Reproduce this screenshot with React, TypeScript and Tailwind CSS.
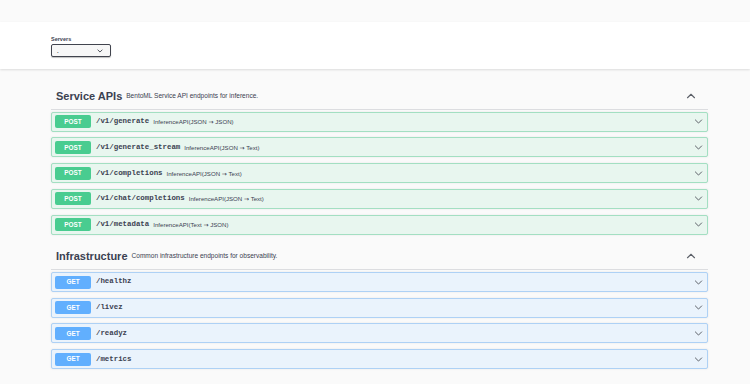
import React from "react";

type Op = { method: "POST" | "GET"; path: string; desc?: [string, string] };

const serviceOps: Op[] = [
  { method: "POST", path: "/v1/generate", desc: ["JSON", "JSON"] },
  { method: "POST", path: "/v1/generate_stream", desc: ["JSON", "Text"] },
  { method: "POST", path: "/v1/completions", desc: ["JSON", "Text"] },
  { method: "POST", path: "/v1/chat/completions", desc: ["JSON", "Text"] },
  { method: "POST", path: "/v1/metadata", desc: ["Text", "JSON"] },
];

const infraOps: Op[] = [
  { method: "GET", path: "/healthz" },
  { method: "GET", path: "/livez" },
  { method: "GET", path: "/readyz" },
  { method: "GET", path: "/metrics" },
];

function Chevron({ up = false, size = 9 }: { up?: boolean; size?: number }) {
  return (
    <svg width={size} height={size} viewBox="0 0 20 20" fill="none">
      <path
        d={up ? "M3 13.5 L10 6.5 L17 13.5" : "M3 6.5 L10 13.5 L17 6.5"}
        stroke="#5c6068"
        strokeWidth="2.2"
        strokeLinecap="round"
        strokeLinejoin="round"
      />
    </svg>
  );
}

function OpRow({ op }: { op: Op }) {
  const post = op.method === "POST";
  return (
    <div
      className={`flex items-center h-[20px] mb-[5.7px] rounded-[2px] border pl-[3px] pr-[4px] shadow-[0_0_2px_rgba(0,0,0,0.1)] ${
        post ? "border-[#a3dfc2] bg-[#e8f6ef]" : "border-[#aed1f5] bg-[#eaf3fc]"
      }`}
    >
      <span
        className={`w-[36px] h-[13px] rounded-[2px] flex items-center justify-center text-white font-bold text-[6.4px] ${
          post ? "bg-[#49cc90]" : "bg-[#61affe]"
        }`}
      >
        {op.method}
      </span>
      <span className="ml-[5px] font-['Liberation_Mono',monospace] font-bold text-[7.4px] text-[#3b4151]">
        {op.path}
      </span>
      {op.desc && (
        <span className="ml-[4px] text-[6.1px] text-[#3b4151]">
          InferenceAPI({op.desc[0]} <span className="font-['DejaVu_Sans',sans-serif]">→</span> {op.desc[1]})
        </span>
      )}
      <span className="ml-auto flex items-center">
        <Chevron />
      </span>
    </div>
  );
}

function Section({ title, desc, ops }: { title: string; desc: string; ops: Op[] }) {
  return (
    <div>
      <div className="flex items-center h-[26.5px] border-b border-[#dcdde0] pl-[5px] pr-[12px]">
        <span className="text-[11px] font-bold text-[#3b4151]">{title}</span>
        <span className="ml-[4px] text-[6.55px] text-[#3b4151]">{desc}</span>
        <span className="ml-auto flex items-center">
          <Chevron up size={10} />
        </span>
      </div>
      <div className="mt-[2.3px]">
        {ops.map((op) => (
          <OpRow key={op.path} op={op} />
        ))}
      </div>
    </div>
  );
}

export default function App() {
  return (
    <div className="min-h-screen bg-[#fafafa] font-['Liberation_Sans',Arial,sans-serif]">
      <div className="h-[22px]" />
      <div className="h-[47px] bg-white shadow-[0_1px_2px_rgba(0,0,0,0.12)] pl-[51px] pt-[14px]">
        <div className="text-[5.5px] font-bold leading-[7px] text-[#3b4151]">Servers</div>
        <div className="mt-[1px] w-[60px] h-[13px] border border-[#41444e] rounded-[2px] bg-[#f7f7f7] shadow-[0_1px_1px_rgba(0,0,0,0.25)] flex items-center pl-[5px] pr-[7px]">
          <span className="text-[6px] font-bold text-[#3b4151] leading-none">.</span>
          <span className="ml-auto flex items-center">
            <svg width="6" height="6" viewBox="0 0 20 20" fill="none">
              <path d="M3 6.5 L10 13.5 L17 6.5" stroke="#41444e" strokeWidth="3" strokeLinecap="round" strokeLinejoin="round" />
            </svg>
          </span>
        </div>
      </div>
      <div className="pl-[51px] w-[708px] pt-[14px]">
        <Section title="Service APIs" desc="BentoML Service API endpoints for inference." ops={serviceOps} />
        <div className="h-[3px]" />
        <Section title="Infrastructure" desc="Common infrastructure endpoints for observability." ops={infraOps} />
      </div>
    </div>
  );
}
